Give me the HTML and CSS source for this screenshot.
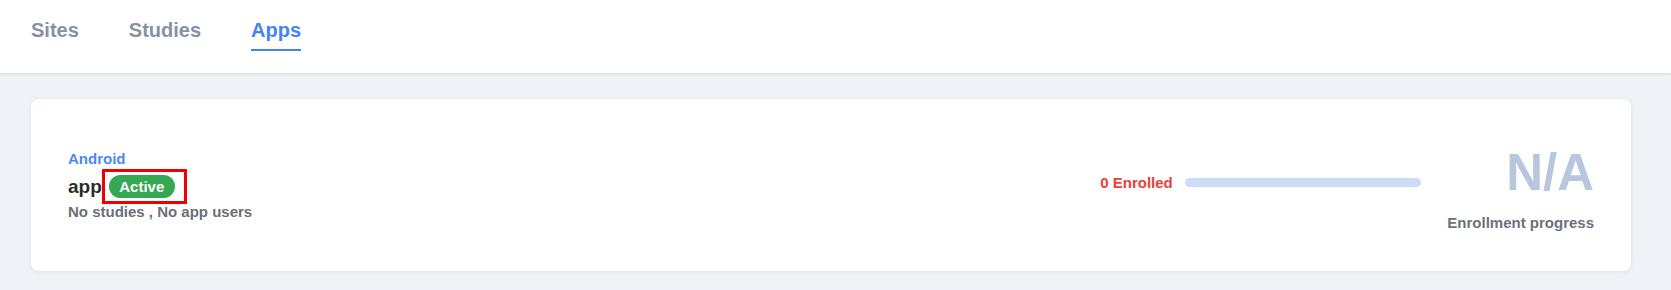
FILE: index.html
```html
<!DOCTYPE html>
<html lang="en">
<head>
<meta charset="utf-8">
<title>Apps</title>
<link rel="stylesheet" href="styles.css">
</head>
<body>
<header class="topbar">
  <nav class="tabs">
    <a class="tab">Sites</a>
    <a class="tab">Studies</a>
    <a class="tab tab-active">Apps</a>
  </nav>
</header>
<main class="content">
  <section class="card">
    <div class="app-info">
      <div class="platform">Android</div>
      <div class="name-row">
        <span class="app-name">app</span>
        <span class="highlight"><span class="badge">Active</span></span>
      </div>
      <div class="meta">No studies , No app users</div>
    </div>
    <div class="progress-area">
      <div class="enrolled-row">
        <span class="enrolled">0 Enrolled</span>
        <div class="bar"><div class="bar-fill" style="width:0%"></div></div>
      </div>
      <div class="stats">
        <div class="stat-value">N/A</div>
        <div class="stat-label">Enrollment progress</div>
      </div>
    </div>
  </section>
</main>
</body>
</html>
```
FILE: styles.css
```css
* { box-sizing: border-box; }
html, body { margin: 0; padding: 0; }
body {
  background: #eff2f6;
  font-family: "Liberation Sans", Arial, sans-serif;
  width: 1671px;
  height: 290px;
  overflow: hidden;
}
.topbar {
  background: #ffffff;
  height: 74px;
  border-bottom: 1px solid #dde2e8;
  box-shadow: 0 1px 3px rgba(0, 0, 0, 0.06);
}
.tabs {
  display: flex;
  gap: 50px;
  padding: 19px 0 0 31px;
}
.tab {
  font-size: 20px;
  line-height: 23px;
  font-weight: 700;
  color: #8592a5;
  padding-bottom: 7px;
  border-bottom: 2px solid transparent;
  cursor: pointer;
}
.tab-active {
  color: #3f83f5;
  border-bottom-color: #3f83f5;
}
.content {
  padding: 25px 40px 0 31px;
}
.card {
  background: #ffffff;
  border-radius: 8px;
  box-shadow: 0 1px 4px rgba(30, 40, 60, 0.08);
  height: 172px;
  padding: 0 37px;
  display: flex;
  align-items: center;
  justify-content: space-between;
}
.app-info {
  display: flex;
  flex-direction: column;
}
.platform {
  font-size: 15px;
  line-height: 17px;
  font-weight: 700;
  color: #4b87f6;
}
.name-row {
  display: flex;
  align-items: center;
  height: 33px;
  margin-top: 3px;
}
.app-name {
  font-size: 19px;
  line-height: 22px;
  font-weight: 700;
  color: #2b2b2b;
}
.highlight {
  display: inline-flex;
  margin-left: 3px;
  padding: 3px 9px 3px 4px;
  outline: 3px solid #f00000;
}
.badge {
  display: inline-block;
  background: #34a853;
  color: #ffffff;
  font-size: 15px;
  line-height: 17px;
  font-weight: 700;
  padding: 3px 10.5px;
  border-radius: 12px;
}
.meta {
  font-size: 15px;
  line-height: 17px;
  font-weight: 700;
  color: #6b6f77;
}
.progress-area {
  display: flex;
  align-items: center;
}
.enrolled-row {
  display: flex;
  align-items: center;
  gap: 12.5px;
  margin-bottom: 6px;
}
.enrolled {
  font-size: 15px;
  line-height: 17px;
  font-weight: 700;
  color: #ee3d38;
}
.bar {
  width: 236px;
  height: 9px;
  border-radius: 5px;
  background: #ccdcf7;
  overflow: hidden;
}
.bar-fill {
  height: 100%;
  background: #3f83f5;
}
.stats {
  display: flex;
  flex-direction: column;
  align-items: flex-end;
  margin-left: 26px;
  padding-top: 8px;
}
.stat-value {
  font-size: 51px;
  line-height: 51px;
  font-weight: 700;
  color: #b8c7de;
}
.stat-label {
  margin-top: 16px;
  font-size: 15px;
  line-height: 17px;
  font-weight: 700;
  color: #6b717c;
}
```
